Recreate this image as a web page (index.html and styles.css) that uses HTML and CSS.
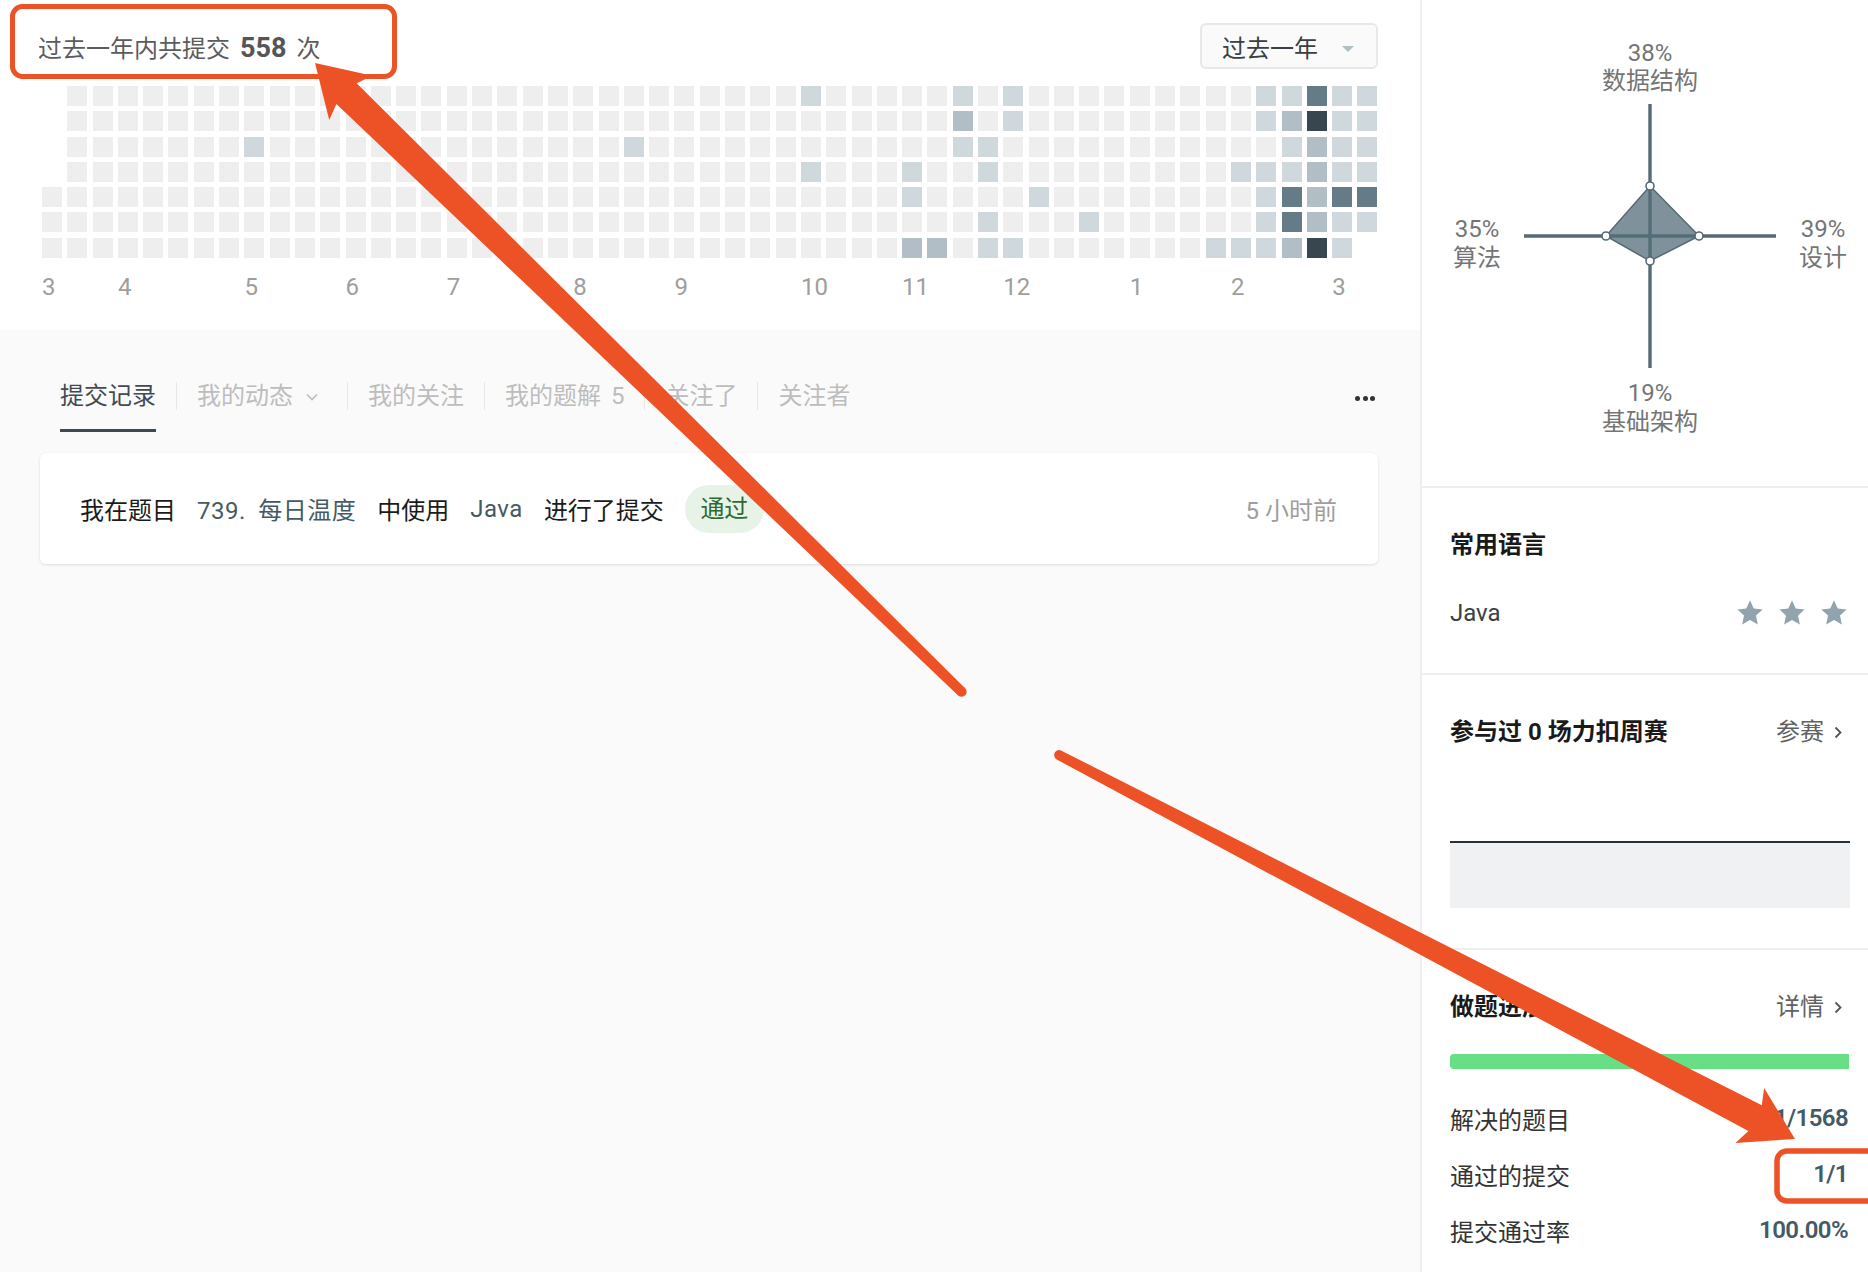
FILE: index.html
```html
<!DOCTYPE html>
<html lang="zh-CN">

<head>
    <meta charset="UTF-8">
    <meta name="viewport" content="width=device-width, initial-scale=1.0">
    <title>个人主页 - 提交记录</title>
    <link rel="stylesheet" href="styles.css">
</head>

<body>
    <div class="page">
        <div class="main">
            <section class="calendar">
                <div class="calendar-header">
                    <h3 class="calendar-title">过去一年内共提交 <b>558</b> 次</h3>
                    <div class="range-select">过去一年 <span class="caret"></span></div>
                </div>
                <div class="heatmap" id="heatmap"></div>
                <div class="months" id="months"></div>
            </section>

            <div class="tabs">
                <span class="tab active">提交记录</span>
                <span class="tab-sep"></span>
                <span class="tab">我的动态
                    <svg class="chev-down" width="12" height="8" viewBox="0 0 12 8"><path d="M1 1.5l5 5 5-5" fill="none" stroke="#bdbdbd" stroke-width="1.6"/></svg>
                </span>
                <span class="tab-sep"></span>
                <span class="tab">我的关注</span>
                <span class="tab-sep"></span>
                <span class="tab">我的题解 5</span>
                <span class="tab-sep"></span>
                <span class="tab">关注了</span>
                <span class="tab-sep"></span>
                <span class="tab">关注者</span>
                <span class="more"><i></i><i></i><i></i></span>
            </div>

            <div class="record-card">
                <span class="plain">我在题目</span>
                <span class="link">739. 每日温度</span>
                <span class="plain">中使用</span>
                <span class="link">Java</span>
                <span class="plain">进行了提交</span>
                <span class="badge-pass">通过</span>
                <span class="time">5 小时前</span>
            </div>
        </div>

        <aside class="side">
            <div class="side-section radar-section">
                <svg class="radar" width="446" height="486" viewBox="0 0 446 486">
                    <g stroke="#566a75" stroke-width="3.4">
                        <line x1="228" y1="104" x2="228" y2="368" />
                        <line x1="102" y1="236" x2="354" y2="236" />
                    </g>
                    <polygon points="228,186 277,236 228,261 184,236" fill="#546e7a" fill-opacity="0.75" stroke="#566a75" stroke-width="1.5" />
                    <g fill="#fff" stroke="#566a75" stroke-width="1.6">
                        <circle cx="228" cy="186" r="4" />
                        <circle cx="277" cy="236" r="4" />
                        <circle cx="228" cy="261" r="4" />
                        <circle cx="184" cy="236" r="4" />
                    </g>
                    <g class="radar-labels" text-anchor="middle">
                        <text x="228" y="61">38%</text>
                        <text x="228" y="89">数据结构</text>
                        <text x="55" y="237">35%</text>
                        <text x="55" y="266">算法</text>
                        <text x="401" y="237">39%</text>
                        <text x="401" y="266">设计</text>
                        <text x="228" y="401">19%</text>
                        <text x="228" y="430">基础架构</text>
                    </g>
                </svg>
            </div>

            <div class="side-section lang-section">
                <div class="side-title">常用语言</div>
                <div class="lang-row">
                    <span>Java</span>
                    <span class="stars">
                        <svg width="30" height="30" viewBox="0 0 24 24"><path d="M12 1.8l3 6.6 7.1.8-5.3 4.8 1.5 7.1L12 17.5l-6.3 3.6 1.5-7.1L1.9 9.2 9 8.4z" fill="#90a4ae"/></svg>
                        <svg width="30" height="30" viewBox="0 0 24 24"><path d="M12 1.8l3 6.6 7.1.8-5.3 4.8 1.5 7.1L12 17.5l-6.3 3.6 1.5-7.1L1.9 9.2 9 8.4z" fill="#90a4ae"/></svg>
                        <svg width="30" height="30" viewBox="0 0 24 24"><path d="M12 1.8l3 6.6 7.1.8-5.3 4.8 1.5 7.1L12 17.5l-6.3 3.6 1.5-7.1L1.9 9.2 9 8.4z" fill="#90a4ae"/></svg>
                    </span>
                </div>
            </div>

            <div class="side-section contest-section">
                <div class="side-head">
                    <span class="side-title">参与过 0 场力扣周赛</span>
                    <span class="side-link">参赛
                        <svg width="8" height="13" viewBox="0 0 8 13"><path d="M1.5 1.5l5 5-5 5" fill="none" stroke="#555" stroke-width="1.8"/></svg>
                    </span>
                </div>
                <div class="contest-chart"></div>
            </div>

            <div class="side-section progress-section">
                <div class="side-head">
                    <span class="side-title">做题进展</span>
                    <span class="side-link">详情
                        <svg width="8" height="13" viewBox="0 0 8 13"><path d="M1.5 1.5l5 5-5 5" fill="none" stroke="#555" stroke-width="1.8"/></svg>
                    </span>
                </div>
                <div class="progress-bar"></div>
                <div class="stat-row"><span>解决的题目</span><span class="stat-value">1/1568</span></div>
                <div class="stat-row"><span>通过的提交</span><span class="stat-value">1/1</span></div>
                <div class="stat-row"><span>提交通过率</span><span class="stat-value">100.00%</span></div>
            </div>
        </aside>
    </div>

    <!-- annotations drawn over the screenshot -->
    <svg class="annotations" width="1868" height="1272" viewBox="0 0 1868 1272">
        <rect x="12.5" y="6.5" width="382" height="70" rx="10" fill="none" stroke="#ec5226" stroke-width="5" />
        <g transform="translate(315 63) rotate(44.2)" fill="#ec5226">
            <polygon points="0,0 50,-31 44,-14.5 902,-5 902,5 44,14.5 50,31" />
            <circle cx="902" cy="0" r="5" />
        </g>
        <g transform="translate(1795 1139) rotate(207.55)" fill="#ec5226">
            <polygon points="0,0 51,-31 45,-14.5 830,-5 830,5 45,14.5 51,31" />
            <circle cx="830" cy="0" r="5" />
        </g>
        <rect x="1777" y="1151" width="110" height="50" rx="10" fill="none" stroke="#ec5226" stroke-width="5.5" />
    </svg>

    <script>
        // submission levels per week column, rows top to bottom
        var levels = {
            8: "0010000",
            23: "0010000",
            30: "1001000",
            34: "0001102",
            35: "0000002",
            36: "1210000",
            37: "0011011",
            38: "1100001",
            39: "0000100",
            41: "0000010",
            46: "0000001",
            47: "0001001",
            48: "1101111",
            49: "1211332",
            50: "3422224",
            51: "1111311",
            52: "1111310"
        };

        var heatmap = document.getElementById('heatmap');
        for (var c = 0; c < 53; c++) {
            var col = levels[c] || "0000000";
            for (var r = 0; r < 7; r++) {
                var cell = document.createElement('span');
                if ((c === 0 && r < 4) || (c === 52 && r === 6)) {
                    cell.className = 'cell blank';
                } else {
                    cell.className = 'cell lv' + col[r];
                }
                heatmap.appendChild(cell);
            }
        }

        var months = [[0, '3'], [3, '4'], [8, '5'], [12, '6'], [16, '7'], [21, '8'], [25, '9'],
            [30, '10'], [34, '11'], [38, '12'], [43, '1'], [47, '2'], [51, '3']];
        var monthRow = document.getElementById('months');
        months.forEach(function (m) {
            var label = document.createElement('span');
            label.textContent = m[1];
            label.style.gridColumn = m[0] + 1;
            monthRow.appendChild(label);
        });
    </script>
</body>

</html>
```

FILE: styles.css
```css
body {
    margin: 0;
    font-family: Roboto, "Noto Sans CJK SC", sans-serif;
    font-size: 24px;
    color: #333;
    background-color: #fafafa;
    position: relative;
}

.page {
    display: flex;
    min-height: 1272px;
}

.main {
    width: 1420px;
}

/* submission calendar */

.calendar {
    background-color: #fff;
    height: 330px;
    box-sizing: border-box;
    padding: 23px 42px 0 38px;
}

.calendar-header {
    display: flex;
    justify-content: space-between;
    align-items: center;
    height: 46px;
}

.calendar-title {
    margin: 0;
    font-size: 24px;
    font-weight: 400;
    color: #5c5c5c;
    word-spacing: 2px;
}

.calendar-title b {
    font-size: 27px;
    color: #555;
    margin: 0 2px;
}

.range-select {
    width: 178px;
    height: 46px;
    box-sizing: border-box;
    border: 2px solid #e8e8e8;
    border-radius: 6px;
    background-color: #fafafa;
    display: flex;
    align-items: center;
    justify-content: space-between;
    padding: 0 22px 0 20px;
    color: #3a3f42;
}

.caret {
    width: 0;
    height: 0;
    border-left: 6px solid transparent;
    border-right: 6px solid transparent;
    border-top: 6px solid #b0bec5;
    margin-top: 5px;
}

.heatmap {
    display: grid;
    grid-template-rows: repeat(7, 20px);
    grid-template-columns: repeat(53, 20px);
    grid-auto-flow: column;
    gap: 5.3px;
    margin: 17px 0 0 4px;
}

.cell {
    background-color: #eee;
}

.cell.lv1 { background-color: #cfd8dc; }
.cell.lv2 { background-color: #b2bec5; }
.cell.lv3 { background-color: #657b87; }
.cell.lv4 { background-color: #37464f; }

.cell.blank {
    visibility: hidden;
}

.months {
    display: grid;
    grid-template-columns: repeat(53, 20px);
    column-gap: 5.3px;
    margin: 14px 0 0 4px;
    height: 30px;
    line-height: 30px;
    color: #9e9e9e;
}

.months span {
    grid-row: 1;
    white-space: nowrap;
}

/* tabs */

.tabs {
    display: flex;
    align-items: flex-start;
    padding: 50px 45px 0 40px;
}

.tab {
    margin: 0 20px;
    line-height: 32px;
    color: #bdbdbd;
    display: flex;
    align-items: center;
    word-spacing: 4px;
}

.tab.active {
    color: #3f4b52;
    padding-bottom: 17px;
    border-bottom: 3px solid #3d4a52;
}

.chev-down {
    margin: 2px 9px 0 13px;
}

.tab-sep {
    width: 1px;
    height: 28px;
    margin-top: 2px;
    background-color: #e6e6e6;
}

.more {
    margin-left: auto;
    height: 32px;
    display: flex;
    align-items: center;
    gap: 2.5px;
    margin-top: 2px;
}

.more i {
    width: 5px;
    height: 5px;
    border-radius: 50%;
    background-color: #333;
}

/* record card */

.record-card {
    margin: 21px 42px 0 40px;
    height: 111px;
    box-sizing: border-box;
    padding: 0 41px 0 40px;
    background-color: #fff;
    border-radius: 6px;
    box-shadow: 0 1px 3px rgba(0, 0, 0, 0.12);
    display: flex;
    align-items: center;
    gap: 21px;
}

.record-card .plain {
    color: #1b1b1b;
}

.record-card .link {
    color: #455a64;
    word-spacing: 6px;
    letter-spacing: 0.5px;
}

.badge-pass {
    height: 48px;
    line-height: 48px;
    padding: 0 15.5px;
    border-radius: 24px;
    background-color: #e8f3e8;
    color: #2e6b30;
}

.record-card .time {
    margin-left: auto;
    color: #9e9e9e;
}

/* right column */

.side {
    width: 446px;
    border-left: 2px solid #eee;
    background-color: #fff;
}

.side-section {
    padding: 41px 18px 40px 28px;
    border-bottom: 2px solid #eee;
}

.radar-section {
    padding: 0;
    height: 486px;
}

.radar {
    display: block;
}

.radar-labels text {
    font-family: Roboto, "Noto Sans CJK SC", sans-serif;
    font-size: 24px;
    fill: #757575;
}

.side-title {
    font-weight: 700;
    color: #1a1a1a;
    line-height: 32px;
}

.lang-section {
    padding-bottom: 44px;
}

.lang-row {
    display: flex;
    justify-content: space-between;
    align-items: center;
    margin-top: 36px;
    height: 32px;
    color: #3c4043;
}

.stars {
    display: flex;
    gap: 12px;
    margin-right: 1px;
}

.stars svg {
    display: block;
}

.side-head {
    display: flex;
    justify-content: space-between;
    align-items: center;
}

.side-link {
    color: #616161;
    display: flex;
    align-items: center;
    gap: 10px;
    margin-right: 8px;
    line-height: 32px;
}

.contest-chart {
    margin-top: 93px;
    height: 67px;
    box-sizing: border-box;
    border-top: 2px solid #263238;
    background-color: #eff1f3;
}

.progress-section {
    border-bottom: none;
    padding-bottom: 0;
}

.progress-bar {
    margin: 31px 1px 21px 0;
    height: 15px;
    border-radius: 4px 0 0 4px;
    background-color: #67df84;
}

.stat-row {
    height: 56px;
    display: flex;
    justify-content: space-between;
    align-items: center;
    color: #333;
}

.stat-value {
    font-weight: 600;
    color: #455a64;
    letter-spacing: -0.6px;
    margin-right: 2px;
}

/* annotation overlay */

.annotations {
    position: absolute;
    top: 0;
    left: 0;
    pointer-events: none;
}
```
